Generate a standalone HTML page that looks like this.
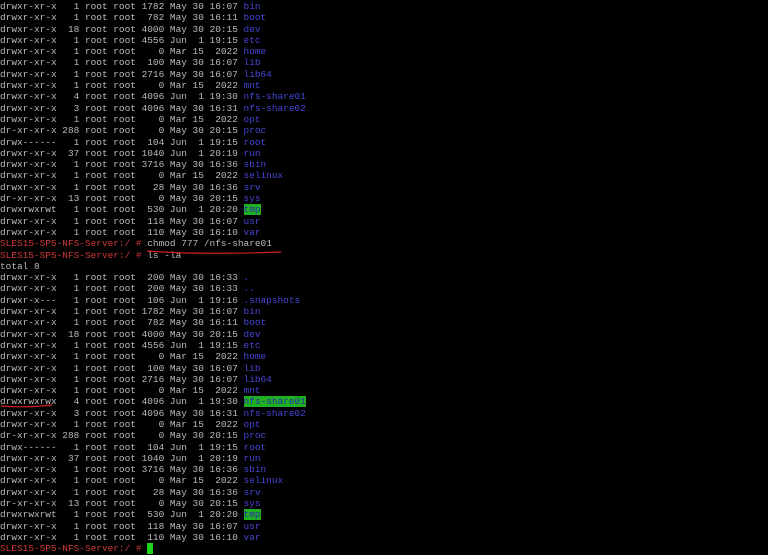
<!DOCTYPE html>
<html><head><meta charset="utf-8"><style>
html,body{margin:0;padding:0;background:#000;width:768px;height:555px;overflow:hidden}
pre{margin:0;padding:0;position:absolute;left:0;top:1px;font-family:"Liberation Mono",monospace;font-size:9.45px;line-height:11.3px;color:#bcbcbc;white-space:pre}
.b{color:#4747d8}
.r{color:#d03838}
.g{background:#1fb01f;color:#2a2ab0}
.c{background:#1fd01f}
svg{position:absolute;left:0;top:0}
</style></head><body>
<pre>drwxr-xr-x   1 root root 1782 May 30 16:07 <span class="b">bin</span>
drwxr-xr-x   1 root root  782 May 30 16:11 <span class="b">boot</span>
drwxr-xr-x  18 root root 4000 May 30 20:15 <span class="b">dev</span>
drwxr-xr-x   1 root root 4556 Jun  1 19:15 <span class="b">etc</span>
drwxr-xr-x   1 root root    0 Mar 15  2022 <span class="b">home</span>
drwxr-xr-x   1 root root  100 May 30 16:07 <span class="b">lib</span>
drwxr-xr-x   1 root root 2716 May 30 16:07 <span class="b">lib64</span>
drwxr-xr-x   1 root root    0 Mar 15  2022 <span class="b">mnt</span>
drwxr-xr-x   4 root root 4096 Jun  1 19:30 <span class="b">nfs-share01</span>
drwxr-xr-x   3 root root 4096 May 30 16:31 <span class="b">nfs-share02</span>
drwxr-xr-x   1 root root    0 Mar 15  2022 <span class="b">opt</span>
dr-xr-xr-x 288 root root    0 May 30 20:15 <span class="b">proc</span>
drwx------   1 root root  104 Jun  1 19:15 <span class="b">root</span>
drwxr-xr-x  37 root root 1040 Jun  1 20:19 <span class="b">run</span>
drwxr-xr-x   1 root root 3716 May 30 16:36 <span class="b">sbin</span>
drwxr-xr-x   1 root root    0 Mar 15  2022 <span class="b">selinux</span>
drwxr-xr-x   1 root root   28 May 30 16:36 <span class="b">srv</span>
dr-xr-xr-x  13 root root    0 May 30 20:15 <span class="b">sys</span>
drwxrwxrwt   1 root root  530 Jun  1 20:20 <span class="g">tmp</span>
drwxr-xr-x   1 root root  118 May 30 16:07 <span class="b">usr</span>
drwxr-xr-x   1 root root  110 May 30 16:10 <span class="b">var</span>
<span class="r">SLES15-SP5-NFS-Server:/ #</span> chmod 777 /nfs-share01
<span class="r">SLES15-SP5-NFS-Server:/ #</span> ls -la
total 8
drwxr-xr-x   1 root root  200 May 30 16:33 <span class="b">.</span>
drwxr-xr-x   1 root root  200 May 30 16:33 <span class="b">..</span>
drwxr-x---   1 root root  106 Jun  1 19:16 <span class="b">.snapshots</span>
drwxr-xr-x   1 root root 1782 May 30 16:07 <span class="b">bin</span>
drwxr-xr-x   1 root root  782 May 30 16:11 <span class="b">boot</span>
drwxr-xr-x  18 root root 4000 May 30 20:15 <span class="b">dev</span>
drwxr-xr-x   1 root root 4556 Jun  1 19:15 <span class="b">etc</span>
drwxr-xr-x   1 root root    0 Mar 15  2022 <span class="b">home</span>
drwxr-xr-x   1 root root  100 May 30 16:07 <span class="b">lib</span>
drwxr-xr-x   1 root root 2716 May 30 16:07 <span class="b">lib64</span>
drwxr-xr-x   1 root root    0 Mar 15  2022 <span class="b">mnt</span>
drwxrwxrwx   4 root root 4096 Jun  1 19:30 <span class="g">nfs-share01</span>
drwxr-xr-x   3 root root 4096 May 30 16:31 <span class="b">nfs-share02</span>
drwxr-xr-x   1 root root    0 Mar 15  2022 <span class="b">opt</span>
dr-xr-xr-x 288 root root    0 May 30 20:15 <span class="b">proc</span>
drwx------   1 root root  104 Jun  1 19:15 <span class="b">root</span>
drwxr-xr-x  37 root root 1040 Jun  1 20:19 <span class="b">run</span>
drwxr-xr-x   1 root root 3716 May 30 16:36 <span class="b">sbin</span>
drwxr-xr-x   1 root root    0 Mar 15  2022 <span class="b">selinux</span>
drwxr-xr-x   1 root root   28 May 30 16:36 <span class="b">srv</span>
dr-xr-xr-x  13 root root    0 May 30 20:15 <span class="b">sys</span>
drwxrwxrwt   1 root root  530 Jun  1 20:20 <span class="g">tmp</span>
drwxr-xr-x   1 root root  118 May 30 16:07 <span class="b">usr</span>
drwxr-xr-x   1 root root  110 May 30 16:10 <span class="b">var</span>
<span class="r">SLES15-SP5-NFS-Server:/ #</span> <span class="c"> </span></pre>
<svg width="768" height="555"><path d="M147 251 Q 200 255 281 252" stroke="#d02020" stroke-width="1.2" fill="none"/><path d="M1 406 Q 28 408 52 405" stroke="#d02020" stroke-width="1.2" fill="none"/></svg>
</body></html>
